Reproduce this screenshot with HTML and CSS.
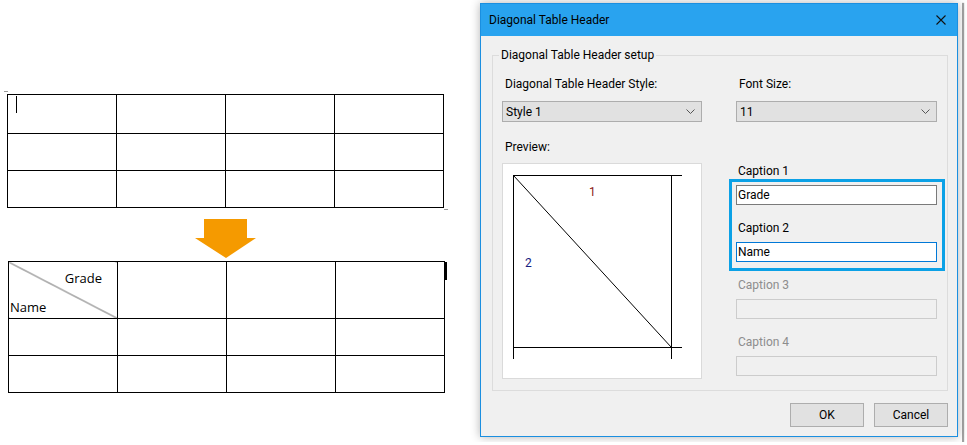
FILE: index.html
```html
<!DOCTYPE html>
<html lang="en">
  <head>
    <meta charset="UTF-8" />
    <title>Diagonal Table Header</title>
    <link rel="stylesheet" href="styles.css">
  </head>
  <body>
    <div class="page">
      <!-- word document side -->
      <div class="doc">
        <div class="tbl_wrap">
          <span class="tbl_mark tbl_mark--start"></span>
          <table class="grid grid--before">
            <tr>
              <td><span class="caret"></span></td>
              <td></td>
              <td></td>
              <td></td>
            </tr>
            <tr><td></td><td></td><td></td><td></td></tr>
            <tr><td></td><td></td><td></td><td></td></tr>
          </table>
          <span class="tbl_mark tbl_mark--end"></span>
        </div>

        <div class="arrow">
          <svg width="62" height="40" viewBox="0 0 62 40">
            <polygon points="9,0 52,0 52,19 61,19 31,39 0,19 9,19" fill="#f59a00" />
          </svg>
        </div>

        <div class="tbl_wrap tbl_wrap--after">
          <table class="grid grid--after">
            <tr class="grid_head">
              <td class="diag">
                <div class="diag_top">Grade</div>
                <div class="diag_bottom">Name</div>
              </td>
              <td></td>
              <td></td>
              <td></td>
            </tr>
            <tr><td></td><td></td><td></td><td></td></tr>
            <tr><td></td><td></td><td></td><td></td></tr>
          </table>
          <span class="caret caret--end"></span>
        </div>
      </div>

      <!-- dialog -->
      <div class="dialog">
        <div class="dialog_title">
          <span>Diagonal Table Header</span>
          <svg class="dialog_close" width="10" height="10" viewBox="0 0 10 10">
            <path d="M0.5 0.5 L9.5 9.5 M9.5 0.5 L0.5 9.5" stroke="#111" stroke-width="1.1" />
          </svg>
        </div>

        <div class="dialog_body">
          <div class="group">
            <span class="group_legend">Diagonal Table Header setup</span>

            <div class="group_row">
              <div class="field">
                <label class="field_label">Diagonal Table Header Style:</label>
                <div class="combo">
                  <span>Style 1</span>
                  <svg width="9" height="5" viewBox="0 0 9 5">
                    <path d="M0.5 0.5 L4.5 4.5 L8.5 0.5" fill="none" stroke="#555" />
                  </svg>
                </div>
              </div>
              <div class="field">
                <label class="field_label">Font Size:</label>
                <div class="combo">
                  <span>11</span>
                  <svg width="9" height="5" viewBox="0 0 9 5">
                    <path d="M0.5 0.5 L4.5 4.5 L8.5 0.5" fill="none" stroke="#555" />
                  </svg>
                </div>
              </div>
            </div>

            <div class="group_row group_row--preview">
              <div class="field">
                <label class="field_label field_label--preview">Preview:</label>
                <div class="preview">
                  <svg width="198" height="214" viewBox="0 0 198 214">
                    <g stroke="#000" stroke-width="1" fill="none">
                      <path d="M10 11.5 H179" />
                      <path d="M10 183.5 H179" />
                      <path d="M10.5 11 V195" />
                      <path d="M168.5 11 V195" />
                      <path d="M10.5 11.5 L168.5 183.5" />
                    </g>
                    <text x="86" y="32" class="preview_num preview_num--one">1</text>
                    <text x="22" y="103" class="preview_num preview_num--two">2</text>
                  </svg>
                </div>
              </div>

              <div class="captions">
                <div class="captions_highlight"></div>
                <div class="caption">
                  <label class="caption_label">Caption 1</label>
                  <div class="caption_input">Grade</div>
                </div>
                <div class="caption">
                  <label class="caption_label">Caption 2</label>
                  <div class="caption_input caption_input--focus">Name</div>
                </div>
                <div class="caption caption--off">
                  <label class="caption_label">Caption 3</label>
                  <div class="caption_input"></div>
                </div>
                <div class="caption caption--off">
                  <label class="caption_label">Caption 4</label>
                  <div class="caption_input"></div>
                </div>
              </div>
            </div>
          </div>

          <div class="dialog_buttons">
            <button class="btn">OK</button>
            <button class="btn">Cancel</button>
          </div>
        </div>
      </div>
    </div>
  </body>
</html>
```

FILE: styles.css
```css
/* variables */
:root {
  --winBlue: #29a3ef;
  --winBorder: #1b8fe0;
  --panel: #f0f0f0;
  --ctrl: #e1e1e1;
  --ctrlBorder: #adadad;
  --uiFont: Roboto, "Liberation Sans", sans-serif;
}

/* base */
*,
::before,
::after {
  box-sizing: border-box;
  margin: 0;
  padding: 0;
}
body {
  background-color: #fff;
  font-family: var(--uiFont);
  font-size: 12px;
  color: #000;
}

.page {
  display: flex;
  width: 962px;
  height: 442px;
  background-color: #fff;
  box-shadow: 2px 3px 1px #a3a3a3;
}

/* document side */
.doc {
  width: 480px;
  padding: 94px 0 0 7px;
}
.tbl_wrap {
  position: relative;
  display: flex;
  align-items: flex-start;
}
.tbl_wrap--after {
  margin-left: 1px;
}
.tbl_mark {
  position: absolute;
  width: 4px;
  height: 4px;
  border-color: #999;
  border-style: solid;
}
.tbl_mark--start {
  left: -3px;
  top: -3px;
  border-width: 1px 0 0 0;
}
.tbl_mark--end {
  left: 437px;
  bottom: -2px;
  border-width: 0 0 1px 0;
}
.grid {
  width: 437px;
  border-collapse: collapse;
  table-layout: fixed;
}
.grid td {
  border: 1px solid #000;
  height: 37px;
  vertical-align: top;
  padding: 0;
}
.grid--before tr:first-child td {
  height: 39px;
}
.grid_head td {
  height: 55px;
}
.caret {
  display: inline-block;
  width: 1px;
  height: 17px;
  margin: 1px 0 0 8px;
  background-color: #000;
}
.caret--end {
  width: 2px;
  height: 18px;
  margin: 1px 0 0 0;
}

.diag {
  background: linear-gradient(
    to top right,
    transparent calc(50% - 0.8px),
    #555 50%,
    transparent calc(50% + 0.8px)
  );
  font-family: "Open Sans", sans-serif;
  font-size: 13px;
  line-height: 18px;
}
.grid_head .diag {
  padding: 7px 15px 2px 1px;
}
.diag_top {
  text-align: right;
}
.diag_bottom {
  margin-top: 11px;
}

.arrow {
  width: 437px;
  display: flex;
  justify-content: center;
  margin: 11px 0 2px;
}
.arrow svg {
  display: block;
}

/* dialog */
.dialog {
  width: 478px;
  height: 434px;
  margin-top: 3px;
  border: 1px solid var(--winBorder);
  background-color: var(--panel);
  box-shadow: 0 0 9px rgba(0, 0, 0, 0.3);
  display: flex;
  flex-direction: column;
}
.dialog_title {
  height: 32px;
  background-color: var(--winBlue);
  display: flex;
  align-items: center;
  justify-content: space-between;
  padding: 0 11px 0 8px;
  font-size: 12px;
}
.dialog_close {
  display: block;
}
.dialog_body {
  padding: 19px 9px 0 11px;
}

.group {
  border: 1px solid #dcdcdc;
  padding: 0 10px 11px 9px;
}
.group_legend {
  display: block;
  width: fit-content;
  margin: -8px 0 0 -3px;
  padding: 0 2px;
  line-height: 15px;
  background-color: var(--panel);
}
.group_row {
  display: grid;
  grid-template-columns: 200px 201px;
  column-gap: 34px;
  margin-top: 14px;
}
.group_row--preview {
  margin-top: 18px;
}
.field_label {
  display: block;
  line-height: 15px;
  padding-left: 3px;
  margin-bottom: 9px;
}
.field_label--preview {
  margin-bottom: 8px;
}
.combo {
  height: 21px;
  background-color: var(--ctrl);
  border: 1px solid var(--ctrlBorder);
  display: flex;
  align-items: center;
  justify-content: space-between;
  padding: 0 6px 0 3px;
}
.combo svg {
  display: block;
}

.preview {
  width: 200px;
  height: 216px;
  background-color: #fff;
  border: 1px solid #dadada;
}
.preview svg {
  display: block;
}
.preview_num {
  font-family: var(--uiFont);
  font-size: 12px;
}
.preview_num--one {
  fill: #8a1616;
}
.preview_num--two {
  fill: #15207f;
}

.captions {
  position: relative;
  padding-top: 24px;
  display: flex;
  flex-direction: column;
  row-gap: 16px;
}
.captions_highlight {
  position: absolute;
  left: -7px;
  top: 39px;
  width: 216px;
  height: 92px;
  border: 3px solid #0ba1e6;
}
.caption_label {
  display: block;
  line-height: 15px;
  padding-left: 2px;
  margin-bottom: 6px;
}
.caption_input {
  height: 20px;
  background-color: #fff;
  border: 1px solid #7a7a7a;
  padding-left: 1px;
  line-height: 18px;
}
.caption_input--focus {
  border-color: #0078d7;
}
.caption--off .caption_label {
  color: #8d8d8d;
}
.caption--off .caption_input {
  background-color: var(--panel);
  border-color: #cccccc;
}

.dialog_buttons {
  display: flex;
  justify-content: flex-end;
  column-gap: 10px;
  margin-top: 12px;
}
.btn {
  width: 74px;
  height: 24px;
  background-color: var(--ctrl);
  border: 1px solid var(--ctrlBorder);
  font-family: var(--uiFont);
  font-size: 12px;
  color: #000;
}
```
